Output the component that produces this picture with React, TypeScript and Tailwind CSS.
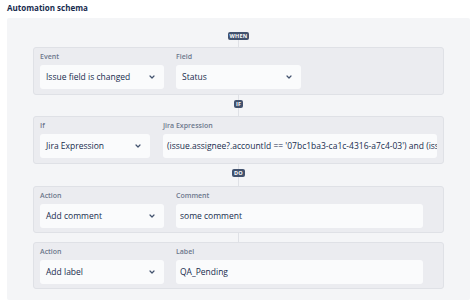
import React from 'react';

const font = { fontFamily: '"Open Sans", "Noto Sans", sans-serif' };

const Chevron: React.FC = () => (
  <svg width="6" height="4" viewBox="0 0 6 4" className="shrink-0">
    <path d="M1 1 L3 3 L5 1" fill="none" stroke="#42526e" strokeWidth="1.2" strokeLinecap="round" strokeLinejoin="round" />
  </svg>
);

const Line: React.FC<{ h: number }> = ({ h }) => (
  <div className="flex justify-center">
    <div className="w-px bg-[#dfe1e6]" style={{ height: h }} />
  </div>
);

const Badge: React.FC<{ label: string; top: number; bottom: number }> = ({ label, top, bottom }) => (
  <div className="flex flex-col items-center">
    <div className="w-px bg-[#dfe1e6]" style={{ height: top }} />
    <div className="h-[8px] px-[2px] rounded-[2px] bg-[#42526e] text-white text-[5.5px] font-bold leading-[8px] tracking-[0.2px]">
      {label}
    </div>
    <div className="w-px bg-[#dfe1e6]" style={{ height: bottom }} />
  </div>
);

const Select: React.FC<{ value: string; width: string }> = ({ value, width }) => (
  <div className={`${width} h-[24px] rounded-[3px] bg-[#fafbfc] flex items-center justify-between pl-[6px] pr-[9px]`}>
    <span className="text-[8.5px] text-[#172b4d] whitespace-nowrap">{value}</span>
    <Chevron />
  </div>
);

const Input: React.FC<{ value: string; width: string }> = ({ value, width }) => (
  <div className={`${width} h-[24px] rounded-[3px] bg-[#fafbfc] flex items-center px-[4px] overflow-hidden`}>
    <span className="text-[8.5px] text-[#172b4d] whitespace-nowrap">{value}</span>
  </div>
);

const Label: React.FC<{ text: string }> = ({ text }) => (
  <div className="h-[10px] text-[7px] font-semibold text-[#6b778c] leading-[10px] mb-[3px]">{text}</div>
);

const Block: React.FC<{ children: React.ReactNode; pt?: string; pb?: string }> = ({ children, pt = 'pt-[4px]', pb = 'pb-[5px]' }) => (
  <div className={`border border-[#dfe1e6] bg-[#ebecf0] rounded-[3px] ${pt} ${pb} pl-[6px] flex`}>
    {children}
  </div>
);

export default function App() {
  return (
    <div className="w-[474px] h-[306px] bg-white overflow-hidden" style={font}>
      <div className="pl-[7px] pt-[2px] h-[18px] text-[8px] font-bold text-[#172b4d] leading-[12px]">
        Automation schema
      </div>
      <div className="mx-[7px] w-[463px] h-[282px] bg-[#f4f5f7] rounded-[2px] pt-[14px] px-[26px]">
        <Badge label="WHEN" top={0} bottom={7} />
        <Block>
          <div className="w-[124px]">
            <Label text="Event" />
            <Select value="Issue field is changed" width="w-[124px]" />
          </div>
          <div className="ml-[12px]">
            <Label text="Field" />
            <Select value="Status" width="w-[125px]" />
          </div>
        </Block>
        <Badge label="IF" top={5} bottom={8} />
        <Block>
          <div>
            <Label text="If" />
            <Select value="Jira Expression" width="w-[110px]" />
          </div>
          <div className="ml-[13px]">
            <Label text="Jira Expression" />
            <Input
              value="(issue.assignee?.accountId == '07bc1ba3-ca1c-4316-a7c4-03') and (issue.status.name == 'QA')"
              width="w-[274px]"
            />
          </div>
        </Block>
        <Badge label="DO" top={5} bottom={9} />
        <Block pt="pt-[4px]" pb="pb-[4px]">
          <div>
            <Label text="Action" />
            <Select value="Add comment" width="w-[124px]" />
          </div>
          <div className="ml-[12px]">
            <Label text="Comment" />
            <Input value="some comment" width="w-[247px]" />
          </div>
        </Block>
        <Line h={9} />
        <Block pt="pt-[4px]" pb="pb-[4px]">
          <div>
            <Label text="Action" />
            <Select value="Add label" width="w-[124px]" />
          </div>
          <div className="ml-[12px]">
            <Label text="Label" />
            <Input value="QA_Pending" width="w-[247px]" />
          </div>
        </Block>
      </div>
    </div>
  );
}
